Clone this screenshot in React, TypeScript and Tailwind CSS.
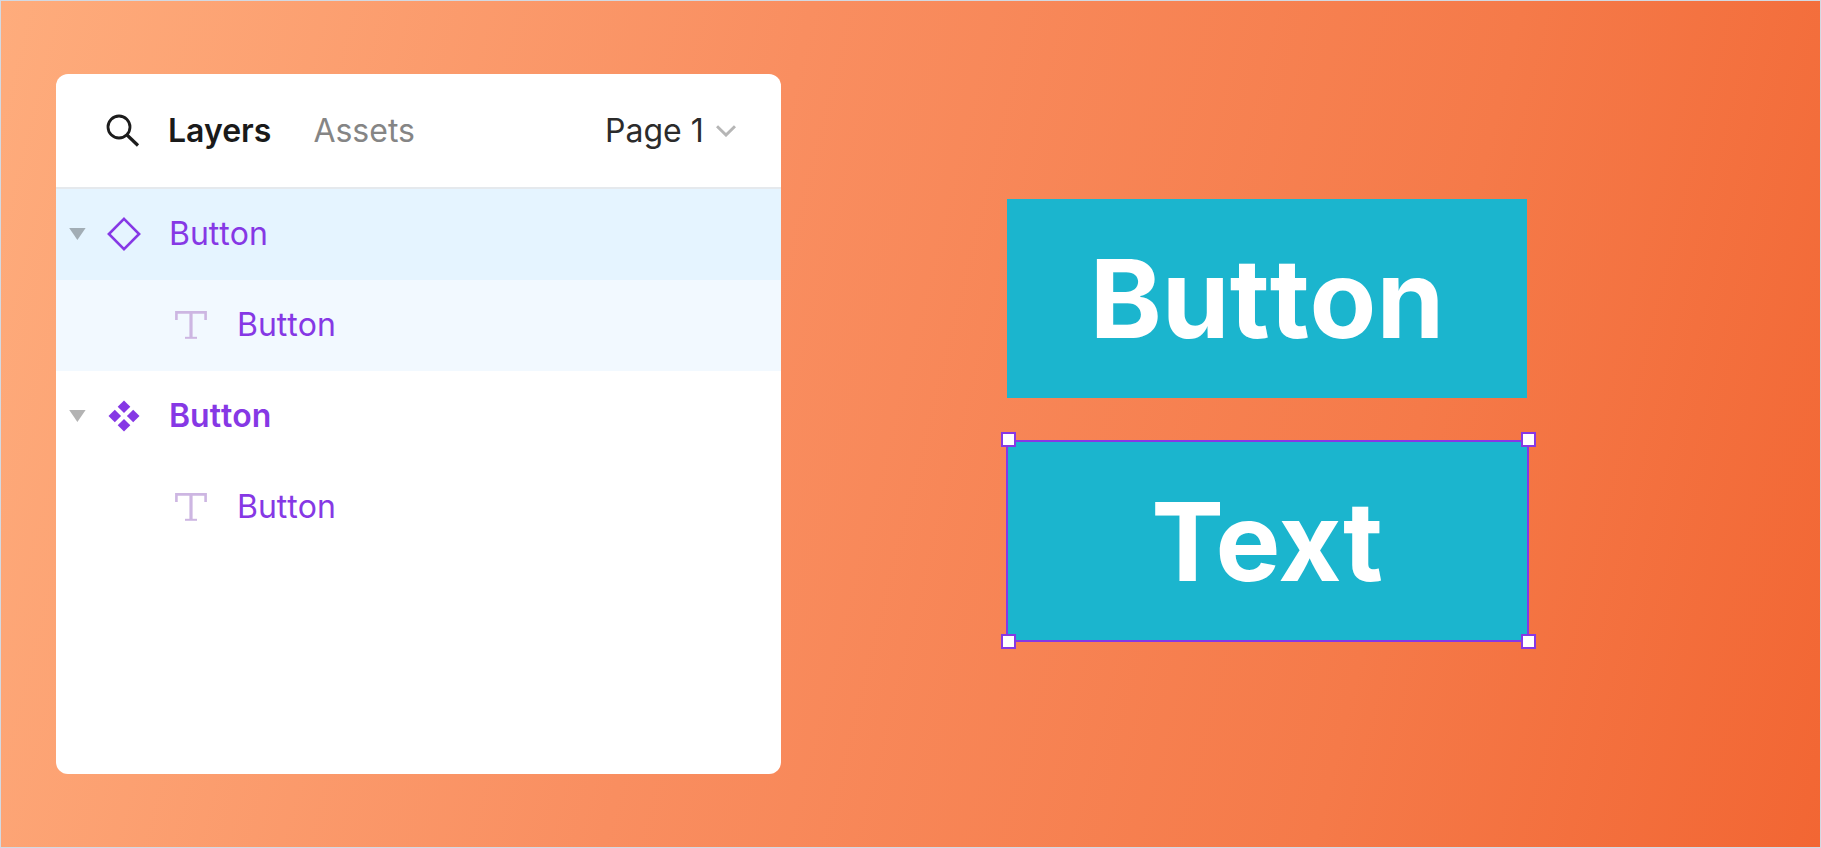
import type { ReactNode } from "react";

function SearchIcon() {
  return (
    <svg width="34" height="34" viewBox="0 0 34 34" fill="none" stroke="#1c1c1c" strokeWidth="2.8" aria-hidden="true">
      <circle cx="13" cy="13" r="11" />
      <path d="M21 21L32 31.5" strokeWidth="3.2" />
    </svg>
  );
}

function ChevronIcon() {
  return (
    <svg className="pointer-events-none" width="20" height="12" viewBox="0 0 20 12" fill="none" stroke="#b6b6b6" strokeWidth="3" aria-hidden="true">
      <path d="M1 1.2L10 10L19 1.2" />
    </svg>
  );
}

function CaretIcon({ className }: { className: string }) {
  return (
    <svg className={className} width="17" height="12" viewBox="0 0 17 12" fill="currentColor" aria-hidden="true">
      <path d="M0.2 0H16.6L8.4 12Z" />
    </svg>
  );
}

function InstanceIcon() {
  return (
    <svg width="34" height="34" viewBox="0 0 34 34" fill="none" stroke="#8638e5" strokeWidth="2.6" aria-hidden="true">
      <path d="M17 1.9L32.1 17L17 32.1L1.9 17Z" />
    </svg>
  );
}

function ComponentIcon() {
  return (
    <svg width="34" height="34" viewBox="0 0 34 34" fill="#8638e5" aria-hidden="true">
      <path d="M17 1.5L23.3 7.8L17 14.1L10.7 7.8Z" />
      <path d="M17 19.9L23.3 26.2L17 32.5L10.7 26.2Z" />
      <path d="M7.8 10.7L14.1 17L7.8 23.3L1.5 17Z" />
      <path d="M26.2 10.7L32.5 17L26.2 23.3L19.9 17Z" />
    </svg>
  );
}

function TextIcon() {
  return (
    <svg width="32" height="28" viewBox="0 0 32 28" fill="none" stroke="#cdb6e2" aria-hidden="true">
      <path d="M1.4 9V1.4H30.6V9" strokeWidth="2.6" />
      <path d="M16 1.4V26.8" strokeWidth="3.2" />
      <path d="M10 26.8H22" strokeWidth="2" />
    </svg>
  );
}

function ParentRow({ icon, rowClass, caretClass }: { icon: ReactNode; rowClass: string; caretClass: string }) {
  return (
    <button type="button" aria-expanded="true" className={`flex h-[91px] w-full items-center pb-0.5 pl-[13px] text-left ${rowClass}`}>
      <CaretIcon className={caretClass} />
      <span className="ml-[21px] mr-7">{icon}</span>
      Button
    </button>
  );
}

function ChildRow({ rowClass }: { rowClass: string }) {
  return (
    <button type="button" className={`flex h-[91px] w-full items-center gap-[30px] pb-0.5 pl-[119px] text-left ${rowClass}`}>
      <TextIcon />
      Button
    </button>
  );
}

const handles = ["-left-[7px] -top-[10px]", "-right-[9px] -top-[10px]", "-bottom-[9px] -left-[7px]", "-bottom-[9px] -right-[9px]"];

export default function App() {
  return (
    <main className="grid min-h-screen grid-cols-[725fr_972fr] border border-[#d3d9e2] bg-[linear-gradient(104deg,#feac7c_0%,#f98e60_40%,#f57a49_75%,#f26633_100%)] py-[73px] pl-[55px] pr-[67px] font-['Inter',sans-serif]">
      <section aria-label="Layers panel" className="overflow-hidden rounded-xl bg-white text-[32px] leading-10">
        <header className="flex h-[115px] items-center border-b-2 border-[#e5e9ed] pl-[50px] pr-[45px]">
          <button type="button" aria-label="Search" className="mr-7">
            <SearchIcon />
          </button>
          <button type="button" className="font-semibold text-[#1a1a1a]">Layers</button>
          <button type="button" className="ml-[42px] text-[#858585]">Assets</button>
          <div className="ml-auto flex items-center gap-3">
            <select aria-label="Page" className="appearance-none bg-transparent text-[#2b2b2b]">
              <option>Page 1</option>
            </select>
            <ChevronIcon />
          </div>
        </header>
        <ul className="text-[#8638e5] [font-kerning:none]">
          <li>
            <ParentRow icon={<InstanceIcon />} rowClass="bg-[#e5f4ff]" caretClass="text-[#a2adb5]" />
            <ChildRow rowClass="bg-[#f2f9ff]" />
          </li>
          <li>
            <ParentRow icon={<ComponentIcon />} rowClass="font-semibold" caretClass="text-[#b3b3b3]" />
            <ChildRow rowClass="bg-white" />
          </li>
        </ul>
      </section>
      <section aria-label="Canvas" className="flex flex-col items-center gap-[42px] pt-[125px] text-[109px] font-bold leading-none text-white">
        <button type="button" className="h-[199px] w-[520px] bg-[#1bb5ce] [font-kerning:none]">Button</button>
        <div className="relative h-[202px] w-[523px] border-2 border-[#8638e5]">
          <button type="button" className="h-full w-full bg-[#1bb5ce]">Text</button>
          {handles.map((place) => (
            <span key={place} className={`absolute h-[15px] w-[15px] border-2 border-[#8638e5] bg-white ${place}`} />
          ))}
        </div>
      </section>
    </main>
  );
}
